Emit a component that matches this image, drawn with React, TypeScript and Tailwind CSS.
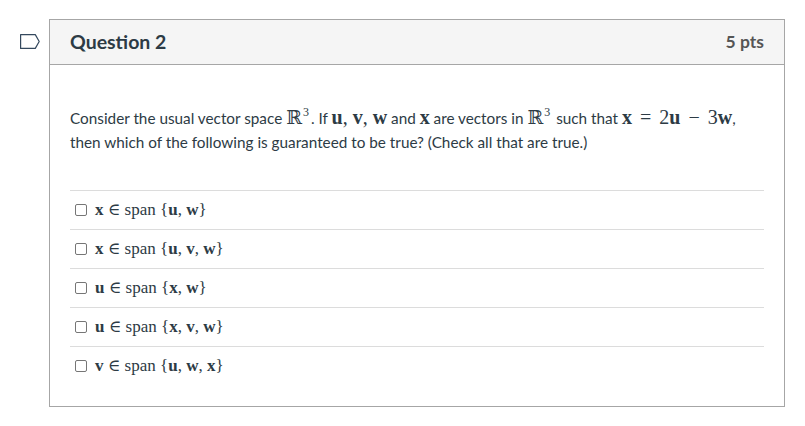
import React from 'react'

const MATH = { fontFamily: '"Liberation Serif", "DejaVu Serif", serif' }

function B({ children }: { children: React.ReactNode }) {
  return <span className="font-bold">{children}</span>
}

function R3() {
  return (
    <span style={MATH} className="text-[19px]">
      ℝ<sup className="-top-[8px] ml-[1px] mr-[2px] text-[12px]">3</sup>
    </span>
  )
}

const ANSWERS: [string, string[]][] = [
  ['x', ['u', 'w']],
  ['x', ['u', 'v', 'w']],
  ['u', ['x', 'w']],
  ['u', ['x', 'v', 'w']],
  ['v', ['u', 'w', 'x']],
]

export default function App() {
  return (
    <div
      className="flex h-[426px] w-[805px] bg-white pt-[19px] text-[#2d3b45]"
      style={{ fontFamily: 'Lato, "Open Sans", sans-serif' }}
    >
      {/* flag */}
      <div className="w-[49px] pl-5 pt-[15px]">
        <svg width="20" height="15" viewBox="0 0 20 15" fill="none">
          <path d="M0.6 0.6H15.3L19.2 7.5L15.3 14.4H0.6Z" stroke="#34495e" strokeWidth="1.2" strokeLinejoin="round" />
        </svg>
      </div>

      <div className="h-[388px] w-[736px] border border-[#a6a6a6]">
        <div className="flex h-[45px] items-center justify-between border-b border-[#a6a6a6] bg-[#f5f5f5] px-5">
          <span className="text-[19.5px] font-bold">Question 2</span>
          <span className="text-[17.5px] font-bold text-[#555]">5 pts</span>
        </div>

        <div className="px-5 pt-[40px]">
          <p className="text-[15.3px] leading-6">
            Consider the usual vector space <R3 />. If{' '}
            <span style={MATH} className="text-[20px]">
              <B>u</B>,<span className="ml-[5px]" /><B>v</B>,<span className="ml-[5px]" /><B>w</B>
            </span>{' '}
            and <span style={MATH} className="text-[20px]"><B>x</B></span> are vectors in <R3 /> such that{' '}
            <span style={MATH} className="text-[20px]">
              <B>x</B>
              <span className="mx-[8px]">=</span>2<B>u</B>
              <span className="mx-[8px]">−</span>3<B>w</B>
            </span>
            ,
            <br />
            then which of the following is guaranteed to be true? (Check all that are true.)
          </p>

          <div className="mt-9">
            {ANSWERS.map(([lhs, set], i) => (
              <div key={i} className="flex h-[39px] items-center border-t border-[#dcdcdc] pl-[5px]">
                <span className="h-3 w-3 rounded-[2px] border border-[#767676] bg-white" />
                <span style={MATH} className="ml-2 text-[17px]">
                  <B>{lhs}</B> ∈ span {'{'}
                  {set.map((s, j) => (
                    <span key={j}>
                      <B>{s}</B>
                      {j < set.length - 1 ? ', ' : ''}
                    </span>
                  ))}
                  {'}'}
                </span>
              </div>
            ))}
          </div>
        </div>
      </div>
    </div>
  )
}
